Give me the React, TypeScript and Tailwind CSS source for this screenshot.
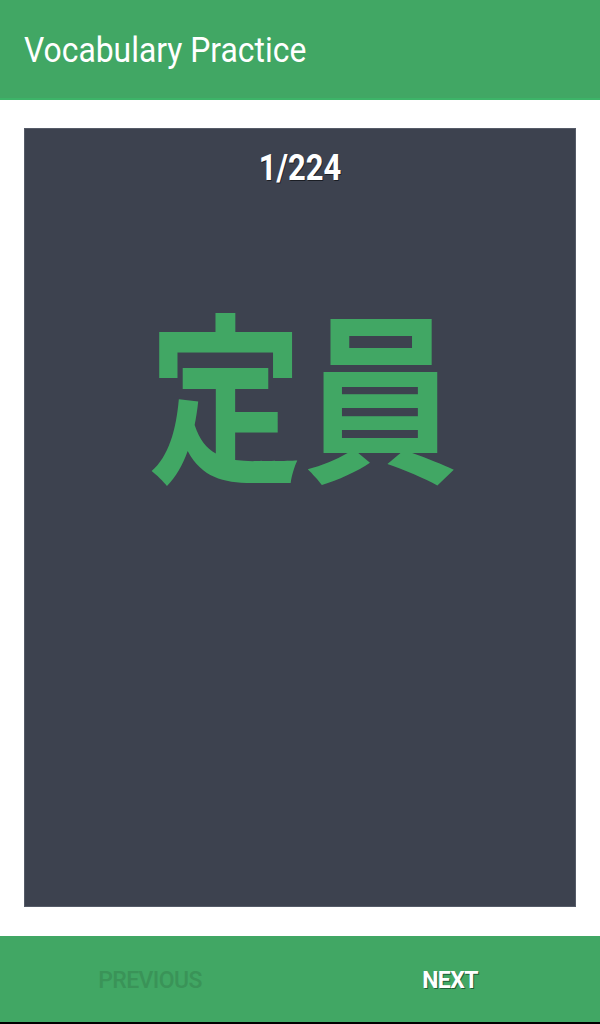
import React, { useState } from 'react';

const words = ['定員'];
const TOTAL = 224;

export default function App() {
  const [index, setIndex] = useState(0);

  const handlePrevious = () => {
    if (index > 0) setIndex(index - 1);
  };

  const handleNext = () => {
    if (index < TOTAL - 1) setIndex(index + 1);
  };

  const word = words[index % words.length];

  return (
    <div className="flex h-[1024px] w-[600px] flex-col bg-white font-['Roboto',sans-serif]">
      {/* app bar */}
      <header className="flex h-[100px] shrink-0 items-center border-b-2 border-[#3db468] bg-[#41a764] px-6">
        <h1 className="mt-[3px] origin-left scale-x-[0.91] text-[35px] leading-none text-white">Vocabulary Practice</h1>
      </header>

      {/* flash card */}
      <main className="flex flex-1 px-6 pb-[29px] pt-[28px]">
        <div className="flex flex-1 flex-col items-center border border-[#555b68] bg-[#3d424f]">
          <div className="mt-[21px] scale-x-[0.86] text-[36px] font-bold leading-none text-white [text-shadow:1px_1px_0_#1a1d24]">
            {index + 1}/{TOTAL}
          </div>
          <div className="ml-[5px] mt-[112px] scale-x-[0.85] whitespace-nowrap font-['Noto_Sans_CJK_JP',sans-serif] text-[182px] font-bold leading-none text-[#41a764]">
            {word}
          </div>
        </div>
      </main>

      {/* navigation */}
      <nav className="flex h-[88px] shrink-0 border-b-2 border-black bg-[#41a764]">
        <button
          onClick={handlePrevious}
          disabled={index === 0}
          className="flex-1 pt-1 text-[23px] font-medium tracking-tight text-[#3a9358] enabled:text-white"
        >
          PREVIOUS
        </button>
        <button
          onClick={handleNext}
          disabled={index === TOTAL - 1}
          className="flex-1 pt-1 text-[23px] font-bold tracking-tight text-white [text-shadow:1px_1px_0_#1f5e35] disabled:text-[#3a9358]"
        >
          NEXT
        </button>
      </nav>
    </div>
  );
}
